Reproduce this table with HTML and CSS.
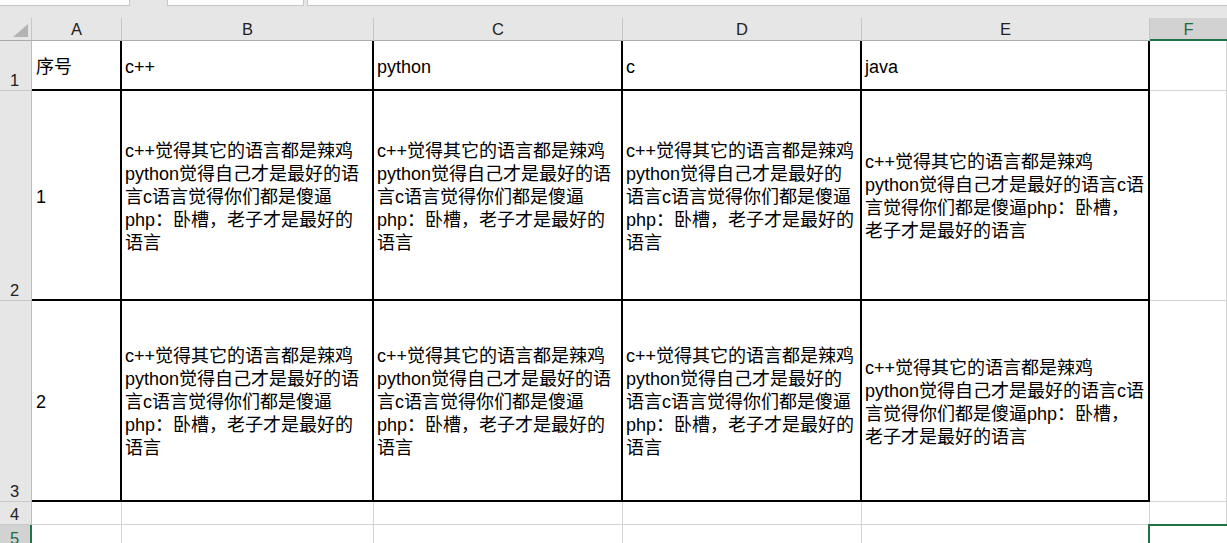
FILE: index.html
```html
<!DOCTYPE html>
<html lang="zh-CN">
<head>
<meta charset="utf-8">
<title>Sheet</title>
<link rel="stylesheet" href="styles.css">
</head>
<body>
<div class="app">
  <div class="topbar">
    <div class="tab tab-1"></div>
    <div class="tab tab-2"></div>
    <div class="tab tab-3"></div>
  </div>
  <div class="sheet">
    <div class="corner"><span class="tri"></span></div>
    <div class="colhead">A</div>
    <div class="colhead">B</div>
    <div class="colhead">C</div>
    <div class="colhead">D</div>
    <div class="colhead">E</div>
    <div class="colhead sel">F</div>

    <div class="rowhead">1</div>
    <div class="cell tb tb-a">序号</div>
    <div class="cell tb">c++</div>
    <div class="cell tb">python</div>
    <div class="cell tb">c</div>
    <div class="cell tb">java</div>
    <div class="cell"></div>

    <div class="rowhead">2</div>
    <div class="cell tb tb-a">1</div>
    <div class="cell tb"><div class="txt">c++觉得其它的语言都是辣鸡<br>python觉得自己才是最好的语<br>言c语言觉得你们都是傻逼<br>php：卧槽，老子才是最好的<br>语言</div></div>
    <div class="cell tb"><div class="txt">c++觉得其它的语言都是辣鸡<br>python觉得自己才是最好的语<br>言c语言觉得你们都是傻逼<br>php：卧槽，老子才是最好的<br>语言</div></div>
    <div class="cell tb"><div class="txt">c++觉得其它的语言都是辣鸡<br>python觉得自己才是最好的<br>语言c语言觉得你们都是傻逼<br>php：卧槽，老子才是最好的<br>语言</div></div>
    <div class="cell tb"><div class="txt">c++觉得其它的语言都是辣鸡<br>python觉得自己才是最好的语言c语<br>言觉得你们都是傻逼php：卧槽，<br>老子才是最好的语言</div></div>
    <div class="cell"></div>

    <div class="rowhead">3</div>
    <div class="cell tb tb-a">2</div>
    <div class="cell tb"><div class="txt">c++觉得其它的语言都是辣鸡<br>python觉得自己才是最好的语<br>言c语言觉得你们都是傻逼<br>php：卧槽，老子才是最好的<br>语言</div></div>
    <div class="cell tb"><div class="txt">c++觉得其它的语言都是辣鸡<br>python觉得自己才是最好的语<br>言c语言觉得你们都是傻逼<br>php：卧槽，老子才是最好的<br>语言</div></div>
    <div class="cell tb"><div class="txt">c++觉得其它的语言都是辣鸡<br>python觉得自己才是最好的<br>语言c语言觉得你们都是傻逼<br>php：卧槽，老子才是最好的<br>语言</div></div>
    <div class="cell tb"><div class="txt">c++觉得其它的语言都是辣鸡<br>python觉得自己才是最好的语言c语<br>言觉得你们都是傻逼php：卧槽，<br>老子才是最好的语言</div></div>
    <div class="cell"></div>

    <div class="rowhead">4</div>
    <div class="cell"></div>
    <div class="cell"></div>
    <div class="cell"></div>
    <div class="cell"></div>
    <div class="cell"></div>
    <div class="cell"></div>

    <div class="rowhead sel">5</div>
    <div class="cell"></div>
    <div class="cell"></div>
    <div class="cell"></div>
    <div class="cell"></div>
    <div class="cell"></div>
    <div class="cell active"></div>
  </div>
</div>
</body>
</html>
```

FILE: styles.css
```css
* { box-sizing: border-box; }

html, body {
  margin: 0;
  padding: 0;
  background: #ffffff;
  overflow: hidden;
}

.app {
  width: 1227px;
  height: 543px;
  overflow: hidden;
  font-family: "Liberation Sans", "Noto Sans CJK SC", sans-serif;
  color: #000;
}

.topbar {
  height: 18px;
  background: #e6e6e6;
  display: flex;
  align-items: flex-start;
}

.tab {
  height: 6px;
  background: #fdfdfd;
  border: 1px solid #c6c6c6;
  border-top: none;
}
.tab-1 { width: 130px; border-left: none; }
.tab-2 { width: 137px; margin-left: 37px; }
.tab-3 { flex: 1; margin-left: 3px; border-right: none; }

.sheet {
  display: grid;
  grid-template-columns: 32px 90px 252px 249px 239px 288px 1fr;
  grid-template-rows: 23px 50px 210px 201px 23px 24px;
}

.corner {
  background: #e6e6e6;
  border-right: 1px solid #c6c6c6;
  border-bottom: 1px solid #ababab;
  position: relative;
}
.tri {
  position: absolute;
  left: 13px;
  top: 6px;
  width: 0;
  height: 0;
  border-left: 15px solid transparent;
  border-bottom: 13px solid #b4b4b4;
}

.colhead {
  background: #e6e6e6;
  border-right: 1px solid #c6c6c6;
  border-bottom: 1px solid #ababab;
  display: flex;
  align-items: center;
  justify-content: center;
  font-size: 16.5px;
  color: #222;
  padding-top: 1px;
}
.colhead.sel {
  background: #d2d2d2;
  border-bottom: 2px solid #217346;
  color: #1f6b40;
  border-right: none;
}

.rowhead {
  background: #e6e6e6;
  border-right: 1px solid #bdbdbd;
  border-bottom: 1px solid #c8c8c8;
  display: flex;
  align-items: flex-end;
  padding-left: 10px;
  padding-bottom: 0px;
  font-size: 16.5px;
  line-height: 20px;
  color: #222;
}
.rowhead.sel {
  background: #d2d2d2;
  border-right: 2px solid #217346;
  color: #1f6b40;
}

.cell {
  border-right: 1px solid #d4d4d4;
  border-bottom: 1px solid #d4d4d4;
  display: flex;
  align-items: center;
  padding-left: 3px;
  font-size: 18px;
  line-height: 23px;
  white-space: nowrap;
  overflow: hidden;
  padding-top: 4px;
}

.cell.tb {
  border-right: 2px solid #000;
  border-bottom: 2px solid #000;
}
.cell.tb-a { padding-left: 4px; }

.txt { line-height: 23px; }

.cell.active {
  position: relative;
  overflow: visible;
  border-right: none;
}
.cell.active::after {
  content: "";
  position: absolute;
  top: -1px;
  left: -2px;
  right: 0;
  bottom: 0;
  border-top: 2px solid #217346;
  border-left: 2px solid #217346;
}
```
